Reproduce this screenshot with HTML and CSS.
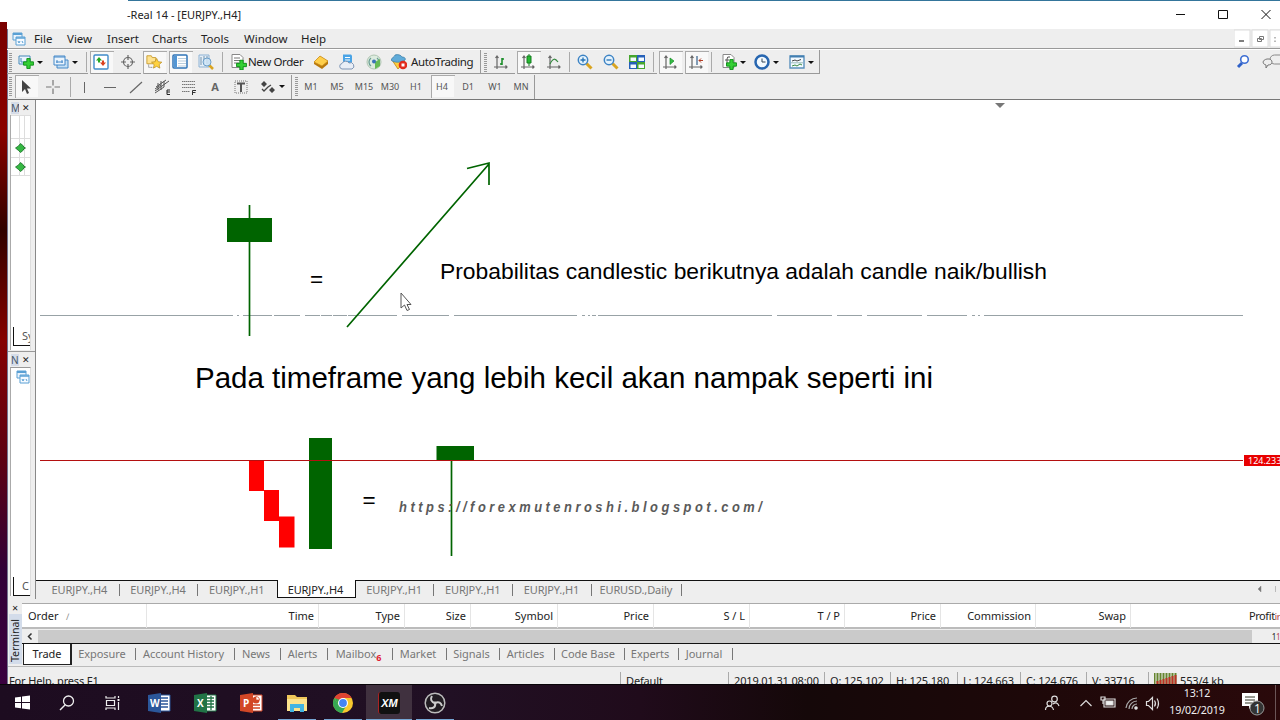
FILE: index.html
```html
<!DOCTYPE html>
<html lang="en">
<head>
<meta charset="UTF-8">
<title>Real 14 - [EURJPY.,H4]</title>
<link rel="stylesheet" href="styles.css">
</head>
<body>
<svg width="0" height="0" class="defs">
    <defs>
        <symbol id="windows" viewBox="0 0 16 14"><path d="M1 2l6-.8v5.300H1zM8 1l8-1v6.500H8zM1 7.500h6v5.300L1 12zM8 7.500h8V14l-8-1z"/></symbol>
        <symbol id="plus" viewBox="0 0 10 10"><path d="M3.500.5h3v3h3v3h-3v3h-3v-3h-3v-3h3z" fill="#35cf35" stroke="#078a12" stroke-width=".8"/></symbol>
        <symbol id="minichart" viewBox="0 0 14 14"><path d="M1 1h9v7H1z" fill="#eaf4fd" stroke="#5aa0d4"/><path d="M1 2h9" stroke="#5aa0d4" stroke-width="2"/><path d="M4 5h9v8H4z" fill="#f5faff" stroke="#5aa0d4"/><path d="M4 6h9" stroke="#5aa0d4" stroke-width="1.500"/><path d="M6 9l1 2 1-2m2 0l1 2" fill="none" stroke="#5aa0d4"/></symbol>
        <symbol id="axes" viewBox="0 0 16 16"><path d="M4 2v13M1 13h13M2.500 4L4 2l1.500 2M12.500 11.500l1.500 1.500-1.500 1.500" fill="none" stroke="#666" stroke-width="1.200"/></symbol>
        <symbol id="lens" viewBox="0 0 16 16"><path d="M9.500 9.500l5 5" stroke="#d9a420" stroke-width="3"/><circle cx="6" cy="6" r="4.700" fill="#e5f3fd" stroke="#3d83c4" stroke-width="1.500"/></symbol>
    </defs>
</svg>
<div class="desktop">
    <div class="window">
        <header class="title-bar">
            <span class="title">-Real 14 - [EURJPY.,H4]</span>
            <svg class="caption" width="110" height="28" viewBox="1170 0 110 28"><path d="M1176 14.500h9M1218.500 10.500h9v8h-9zM1261.500 10l9 9m0-9l-9 9" fill="none" stroke="#111"/></svg>
        </header>
        <nav class="menu-bar">
            <svg width="14" height="14"><use href="#minichart"/></svg>
            <span class="m-file">File</span><span class="m-view">View</span><span class="m-insert">Insert</span><span class="m-charts">Charts</span><span class="m-tools">Tools</span><span class="m-window">Window</span><span class="m-help">Help</span>
            <svg class="mdi" width="46" height="19" viewBox="1234 29 46 19"><path d="M1234 30h16v17h-16zM1252 30h16v17h-16zM1270 30h16v17h-16z" fill="#fff" stroke="#ddd"/><path d="M1239 41h5" stroke="#555" stroke-width="1.500"/><path d="M1259.500 36.500h4v3h-4zM1257.500 38.500h4v3h-4z" fill="#fff" stroke="#777"/><path d="M1275 37v1.500m0 2v1.500" stroke="#777"/></svg>
        </nav>

        <!-- standard toolbar -->
        <div class="toolbar standard">
            <i class="grip"></i>
            <span class="btn drop"><svg viewBox="0 0 16 16"><path d="M1 2h11v8H1z" fill="#eaf4fd" stroke="#4488b8"/><path d="M3 4v4h7" fill="none" stroke="#4488b8"/><use href="#plus" x="5" y="4" width="11" height="11"/></svg></span>
            <span class="btn drop"><svg viewBox="0 0 16 16"><path d="M4 6h11v8H4z" fill="#c4dff4" stroke="#4488c8"/><path d="M1 2h11v9H1z" fill="#eaf4fd" stroke="#4488c8"/><path d="M1 3h11M3 8h7M4 6v3m5-3v3" stroke="#4488c8"/></svg></span>
            <i class="sep narrow"></i>
            <span class="btn on"><svg viewBox="0 0 16 16"><rect x="1" y="1" width="14" height="14" rx="1" fill="#fff" stroke="#3f8bc9" stroke-width="1.400"/><path d="M6 3l3 3.500H7v2H5v-2H3z" fill="#22a822"/><path d="M9 6.500h2v2h2L10 12 7 8.500h2z" fill="#d9401c"/></svg></span>
            <span class="btn gap1"><svg viewBox="0 0 16 16"><circle cx="8" cy="8" r="4.500" fill="none" stroke="#666" stroke-width="1.200"/><path d="M8 1v5M8 10v5M1 8h5M10 8h5" stroke="#666" stroke-width="1.200"/></svg></span>
            <span class="btn on"><svg viewBox="0 0 18 16"><path d="M1 1h5l1 2h4v7H1z" fill="#ffe390" stroke="#c79a2b"/><path d="M3 11v3h5" fill="none" stroke="#555" stroke-dasharray="1 1"/><path d="M12 4l1.800 3.700 4 .5-3 2.700.8 4-3.600-2-3.600 2 .8-4-3-2.700 4-.5z" fill="#ffd23f" stroke="#b78a1f" stroke-width=".8"/></svg></span>
            <span class="btn on"><svg viewBox="0 0 16 16"><rect x="1" y="1" width="14" height="13" rx="1" fill="#fff" stroke="#2f74b8" stroke-width="1.500"/><path d="M2 2h3v11H2z" fill="#5296d5"/><path d="M6 4.500h8M6 7h8M6 9.500h8M6 12h8" stroke="#b8cddd"/></svg></span>
            <span class="btn"><svg viewBox="0 0 16 16"><path d="M1 1h10v12H1z" fill="#e5eff8" stroke="#8db2d4"/><path d="M3 3v8m3-9v8m3-8v8" stroke="#7694ac"/><path d="M11 11l4 4" stroke="#d9a420" stroke-width="2.500"/><circle cx="9" cy="8" r="4" fill="#cfe6f8" fill-opacity=".8" stroke="#6c9fc9"/></svg></span>
            <i class="sep"></i>
            <span class="btn order"><svg viewBox="0 0 16 16"><path d="M1 .5h8l3 3v10H1z" fill="#fff" stroke="#888"/><path d="M3 4h6M3 6.500h6M3 9h5" stroke="#777"/><use href="#plus" x="5" y="5.500" width="11" height="11"/></svg></span>
            <span class="label new-order">New Order</span>
            <span class="btn"><svg viewBox="0 0 16 16"><path d="M1 8l6-6 8 5v3l-6 5-8-5z" fill="#b9790c"/><path d="M1 8l6-6 8 5-6 5z" fill="#ffcf4a" stroke="#c98c1c" stroke-width=".7"/></svg></span>
            <span class="btn"><svg viewBox="0 0 16 16"><path d="M4 .5h8l1 1v8H4z" fill="#4aa4e6"/><path d="M6 3.500h5M6 6h5" stroke="#fff"/><path d="M3 15a2.800 2.800 0 0 1 0-5.500 4 4 0 0 1 7-.5 3 3 0 0 1 3 6z" fill="#e9eef6" stroke="#7e95b5"/></svg></span>
            <span class="btn gap1"><svg viewBox="0 0 16 16"><circle cx="8" cy="8" r="7" fill="#dcebdf" stroke="#b0c5b2"/><path d="M5 4a5 5 0 0 0 0 8M11 4a5 5 0 0 1 0 8" fill="none" stroke="#6b9f94" stroke-width="1.300"/><path d="M9 8v7l5-3V5z" fill="#65bb55"/><circle cx="8" cy="7.500" r="2" fill="#3973b8"/></svg></span>
            <span class="btn auto"><svg viewBox="0 0 16 16"><path d="M1 6l6 9 7-8z" fill="#ffce3d" stroke="#cc9527"/><path d="M0 6c1-3 3-2 4-5 3-1 6 0 7 2 3 0 4 2 3 3-4 3-11 3-14 0z" fill="#5fabd9" stroke="#397ba5" stroke-width=".7"/><circle cx="12" cy="11" r="4.300" fill="#e12b1c"/><path d="M10.500 9.500h3v3h-3z" fill="#fff"/></svg></span>
            <span class="label autotrading">AutoTrading</span>
            <i class="end"></i><i class="grip second"></i>
            <span class="btn"><svg viewBox="0 0 16 16"><use href="#axes"/><path d="M7 10h2m0-6v7m0-6h2" fill="none" stroke="#138a22" stroke-width="1.500"/></svg></span>
            <span class="btn on gap1"><svg viewBox="0 0 16 16"><use href="#axes"/><path d="M9 0v12" stroke="#157d20"/><path d="M7 2h4v7H7z" fill="#27ba33" stroke="#157d20"/></svg></span>
            <span class="btn"><svg viewBox="0 0 16 16"><use href="#axes"/><path d="M4 10c3-6 5-6 8-2" fill="none" stroke="#35883f" stroke-width="1.200"/></svg></span>
            <i class="sep narrow"></i>
            <span class="btn gap1"><svg viewBox="0 0 16 16"><use href="#lens"/><path d="M3.500 6h5M6 3.500v5" stroke="#2472b5" stroke-width="1.300"/></svg></span>
            <span class="btn"><svg viewBox="0 0 16 16"><use href="#lens"/><path d="M3.500 6h5" stroke="#2472b5" stroke-width="1.300"/></svg></span>
            <span class="btn"><svg viewBox="0 0 16 16"><path d="M0 1h8v7H0zM8 8h8v7H8z" fill="#46a62e"/><path d="M8 1h8v7H8zM0 8h8v7H0z" fill="#2560b9"/><path d="M1.500 3.500H7V7H1.500zM9.500 3.500H15V7H9.500zM1.500 10.500H7V14H1.500zM9.500 10.500H15V14H9.500z" fill="#f4faff"/></svg></span>
            <i class="sep wide"></i>
            <span class="btn on"><svg viewBox="0 0 16 16"><use href="#axes"/><path d="M8 4l4 3-4 3.500z" fill="#36bd45" stroke="#138a22" stroke-width=".7"/></svg></span>
            <span class="btn on"><svg viewBox="0 0 16 16"><use href="#axes"/><path d="M9 2v9" stroke="#426a91" stroke-width="1.300"/><path d="M15 6.500h-4m2-2l-2 2 2 2" fill="none" stroke="#b23c24"/></svg></span>
            <i class="sep tail"></i>
            <span class="btn drop"><svg viewBox="0 0 16 16"><path d="M2 .5h8l3 3v10H2z" fill="#fff" stroke="#888"/><path d="M9 3q-3-1-3 2v6M4 6h4" fill="none" stroke="#555"/><use href="#plus" x="5" y="5" width="11" height="11"/></svg></span>
            <span class="btn drop narrower"><svg viewBox="0 0 16 16"><circle cx="8" cy="8" r="6.500" fill="#f3faff" stroke="#2766b0" stroke-width="2.500"/><path d="M8 4.500V8h3.500" fill="none" stroke="#345"/></svg></span>
            <span class="btn drop"><svg viewBox="0 0 16 16"><path d="M1 2h14v12H1z" fill="#f3faff" stroke="#5b91bd" stroke-width="1.400"/><path d="M1 2.500h14" stroke="#427eb0" stroke-width="2"/><path d="M3 7l3-1 2 1 4-1.500" fill="none" stroke="#444"/><path d="M2 8.800h12" stroke="#9bb"/><path d="M3 12l3-1 2 1 3-2 2 1" fill="none" stroke="#388a42"/></svg></span>
            <svg class="search" viewBox="0 0 44 18"><path d="M6 10l-4 4" stroke="#2f61c8" stroke-width="3"/><circle cx="8.500" cy="6.500" r="3.800" fill="#fff" stroke="#3e6fd3" stroke-width="1.600"/><rect x="34" y="2" width="20" height="9" rx="4.500" fill="#eee" stroke="#888"/><path d="M31 6c6-1 7 6 1 6l-2 3v-3c-4-1-4-5 1-6z" fill="#eee" stroke="#777"/></svg>
        </div>

        <!-- line studies + periods -->
        <div class="toolbar studies">
            <i class="grip"></i>
            <span class="btn on cursor"><svg viewBox="0 0 16 16"><path d="M4 1v12l3-3 2 5 2-1-2-4.500h4z" fill="#444"/></svg></span>
            <span class="btn cross"><svg viewBox="0 0 16 16"><path d="M8 1v5.500M8 9.500V15M1 8h5.500M9.500 8H15" stroke="#777" stroke-width="1.200"/></svg></span>
            <i class="sep"></i>
            <span class="btn vline"><svg viewBox="0 0 16 16"><path d="M8.500 3v11" stroke="#666"/></svg></span>
            <span class="btn"><svg viewBox="0 0 16 16"><path d="M2 8.500h12" stroke="#666"/></svg></span>
            <span class="btn"><svg viewBox="0 0 16 16"><path d="M2 14L14 3" stroke="#666" stroke-width="1.200"/></svg></span>
            <span class="btn gap1"><svg viewBox="0 0 16 16"><path d="M0 12L14 2M1 8l10-7M3 4v7m3-9v9m3-9v6M0 14l9-6M0 10l6-4" stroke="#555"/><path d="M15 11h-3v4.500h3M12 13h3" fill="none" stroke="#222"/></svg></span>
            <span class="btn"><svg viewBox="0 0 16 16"><path d="M1 2.500h13M1 5.500h13M1 8.500h13M1 12.500h8" stroke="#777" stroke-dasharray="1.500 .5"/><path d="M11.500 16v-4.500H15M11.500 13.500h3" fill="none" stroke="#333"/></svg></span>
            <span class="btn letter">A</span>
            <span class="btn"><svg viewBox="0 0 16 16"><rect x="2" y="2" width="12" height="12" fill="none" stroke="#777" stroke-dasharray="1 1"/><path d="M4 4.500h8M8 4.500V13" stroke="#555" stroke-width="2"/></svg></span>
            <span class="btn drop arrows"><svg viewBox="0 0 16 16"><path d="M4 2l3 3-3 3-3-3zM12 8l3 3-3 3-3-3z" fill="#444"/><path d="M2 10l2 2 4-4 3-2" fill="none" stroke="#444" stroke-width="1.300"/></svg></span>
            <i class="end"></i><i class="grip third"></i>
            <span class="btn per">M1</span><span class="btn per">M5</span><span class="btn per gap1">M15</span><span class="btn per">M30</span><span class="btn per">H1</span><span class="btn per on">H4</span><span class="btn per">D1</span><span class="btn per gap1">W1</span><span class="btn per">MN</span>
            <i class="end"></i>
        </div>

        <div class="workspace">
            <aside class="side">
                <div class="side-title"><b>M</b><span>✕</span></div>
                <div class="side-body market">
                    <svg width="20" height="61" viewBox="0 0 20 61"><path d="M0 .5h20M0 23.500h20M0 42.500h20M0 60.500h20M8.500 0v60M13.500 0v60" stroke="#ddd"/><g fill="#35b843" stroke="#146c22" stroke-width=".8"><path d="M9.500 28.500l3 2.500v1l2 1-2 1v1l-3 2.500-2-2-3-2.500 3-2z"/><path d="M9.500 47.500l3 2.500v1l2 1-2 1v1l-3 2.500-2-2-3-2.500 3-2z"/></g></svg>
                    <span class="side-tab">Sy</span>
                </div>
                <div class="side-title nav-title"><b>N</b><span>✕</span></div>
                <div class="side-body navigator">
                    <svg width="14" height="14"><use href="#minichart"/></svg>
                    <span class="side-tab">C</span>
                </div>
            </aside>
            <main class="chart-area">
                <!-- chart drawing, one unit per pixel -->
                <svg class="chart" width="1244" height="480" viewBox="36 100 1244 480">
                    <path d="M995 103h10l-5 5z" fill="#777"/>
                    <path d="M40 315.500H1243" stroke="#98a2a6"/>
                    <path d="M233 315.500h4M239 315.500h4M272 315.500h2M300 315.500h5M320 315.500h1M332 315.500h1M347 315.500h1M397 315.500h5M449 315.500h5M577 315.500h5M585 315.500h3M590 315.500h2M596 315.500h2M772 315.500h5M832 315.500h5M862 315.500h5M922 315.500h5M967 315.500h5M975 315.500h3M980 315.500h4" stroke="#fff" stroke-width="2"/>
                    <g fill="none" stroke="#006400" stroke-width="1.700">
                        <path d="M249.500 205v131M451.500 461v95M347 327l142-163M467 168.500l22-5.500v22"/>
                    </g>
                    <path d="M227 218h45v24h-45zM309 438h23v111h-23zM436.500 446h37.500v15h-37.500z" fill="#006400"/>
                    <path d="M249 461h15v30h-15zM264 490h15v31h-15zM279 516.500h15.500v31H279z" fill="#f00"/>
                    <path d="M40 460.500H1243" stroke="#b41010"/>
                    <path d="M401 293v15l3.500-3 2.500 5.500 2.500-1-2.500-5h4z" fill="#fff" stroke="#555"/>
                    <text x="310" y="287" font-size="22.500">=</text>
                    <text x="362.500" y="508" font-size="22.500">=</text>
                    <text x="440" y="279" font-size="22.500" textLength="607" lengthAdjust="spacingAndGlyphs">Probabilitas candlestic berikutnya adalah candle naik/bullish</text>
                    <text x="195" y="388" font-size="29.500" textLength="738" lengthAdjust="spacingAndGlyphs">Pada timeframe yang lebih kecil akan nampak seperti ini</text>
                    <text class="watermark" transform="translate(399 512) scale(.86 1)" textLength="422">https://forexmutenroshi.blogspot.com/</text>
                    <path d="M1244 455h36v11h-36z" fill="#e80000"/>
                    <text class="price" x="1248" y="464">124.2333</text>
                </svg>
                <div class="chart-tabs">
                    <span>EURJPY.,H4</span><span>EURJPY.,H4</span><span class="before">EURJPY.,H1</span><span class="active">EURJPY.,H4</span><span>EURJPY.,H1</span><span>EURJPY.,H1</span><span>EURJPY.,H1</span><span class="daily">EURUSD.,Daily</span>
                    <svg class="tab-scroll" width="24" height="16"><path d="M5 5v6L2 8zM19.500 5v6" fill="#777" stroke="#888" stroke-width=".5"/></svg>
                </div>
            </main>
        </div>

        <section class="terminal">
            <div class="terminal-side"><span class="close">✕</span><span class="vertical">Terminal</span></div>
            <div class="terminal-body">
                <div class="columns">
                    <span class="first">Order <i>&nbsp; ∕</i></span><span>Time</span><span>Type</span><span>Size</span><span>Symbol</span><span>Price</span><span>S / L</span><span>T / P</span><span>Price</span><span>Commission</span><span>Swap</span><span class="last">Profit<i>ir</i></span>
                </div>
                <div class="scroll"><svg width="16" height="13"><path d="M9.500 3.500l-3 3 3 3" fill="none" stroke="#333" stroke-width="1.500"/></svg><i></i><b>1<u>1</u></b></div>
                <div class="terminal-tabs">
                    <span class="active">Trade</span><span>Exposure</span><span>Account History</span><span>News</span><span>Alerts</span><span>Mailbox<sub>6</sub></span><span>Market</span><span>Signals</span><span>Articles</span><span>Code Base</span><span>Experts</span><span>Journal</span>
                </div>
            </div>
        </section>
        <footer class="status">
            <span>For Help, press F1</span><span>Default</span><span>2019.01.31 08:00</span><span>O: 125.102</span><span>H: 125.180</span><span>L: 124.663</span><span>C: 124.676</span><span>V: 33716</span>
            <span><svg width="23" height="13" viewBox="0 0 23 13"><path d="M.5 1v12M3.500 1v12M6.500 1v12M9.500 1v12M12.500 1v12M15.500 1v12M18.500 1v12M21.500 1v12" stroke="#65852e" stroke-width="2"/><path d="M3.500 9v4M6.500 8v5M9.500 7v6M12.500 6v7M15.500 5v8M18.500 4v9M21.500 3v10" stroke="#bd3025" stroke-width="2"/></svg>553/4 kb</span>
        </footer>
    </div>

    <div class="taskbar">
        <span class="task start"><svg width="16" height="15"><use href="#windows" fill="#fff"/></svg></span>
        <span class="task"><svg width="16" height="16"><circle cx="9.500" cy="6" r="5" fill="none" stroke="#eee" stroke-width="1.300"/><path d="M6 10l-5 5" stroke="#eee" stroke-width="1.400"/></svg></span>
        <span class="task"><svg width="17" height="16"><path d="M1 1v2h9V1M1 15v-2h9v2M1.500 5.500h8v5h-8zM13.500 1v2m0 4v8" fill="none" stroke="#eee" stroke-width="1.200"/><path d="M12.500 4h2v2h-2z" fill="#eee"/></svg></span>
        <span class="task office"><svg width="24" height="22"><path d="M12 3h11v16H12z" fill="#fff" stroke="#2b579a"/><path d="M14 6h7M14 9h7M14 12h7M14 15h7" stroke="#2b579a" stroke-width="1.300"/><path d="M1 3l13-2v20L1 19z" fill="#2b579a"/><text x="3" y="15">W</text></svg></span>
        <span class="task office"><svg width="24" height="22"><path d="M12 3h11v16H12z" fill="#fff" stroke="#217346"/><path d="M14 6h7M14 9h7M14 12h7M14 15h7M18 4v14" stroke="#217346" stroke-width="1.300"/><path d="M1 3l13-2v20L1 19z" fill="#217346"/><text x="4" y="15">X</text></svg></span>
        <span class="task office"><svg width="24" height="22"><path d="M12 3h11v16H12z" fill="#fff" stroke="#d24726"/><circle cx="17" cy="8" r="3.500" fill="#d24726"/><path d="M17 8V4.500A3.500 3.500 0 0 1 20.500 8z" fill="#fff" stroke="#d24726" stroke-width=".7"/><path d="M14 13h7M14 16h7" stroke="#d24726" stroke-width="1.300"/><path d="M1 3l13-2v20L1 19z" fill="#d24726"/><text x="4" y="15">P</text></svg></span>
        <span class="task open"><svg width="22" height="20"><path d="M1 2h8l2 2h10v14H1z" fill="#efc75a"/><path d="M1 6h20v12H1z" fill="#fce38d"/><path d="M4 19v-8h14v8h-4v-4H8v4z" fill="#42b4e2"/></svg></span>
        <span class="task open"><svg width="22" height="22" viewBox="0 0 22 22"><circle cx="11" cy="11" r="10" fill="#f7c82e"/><path d="M11 11L2.300 6A10 10 0 0 1 19.700 6H11z" fill="#df4332"/><path d="M2.300 6A10 10 0 0 0 10 21l4.800-8.200L11 11 6.500 13z" fill="#35a853"/><path d="M2.300 6l4.300 7.500 3-5z" fill="#35a853"/><circle cx="11" cy="11" r="5" fill="#fff"/><circle cx="11" cy="11" r="3.900" fill="#4285f4"/></svg></span>
        <span class="task open current"><b>XM</b></span>
        <span class="task open"><svg width="22" height="22" viewBox="0 0 22 22"><circle cx="11" cy="11" r="9.800" fill="#211c22" stroke="#bbb" stroke-width="1.500"/><path d="M11 11c-4-1-5-4-3-7m3 7c4-2 6 0 7 3m-7-3c1 4-2 6-6 5" fill="none" stroke="#ccc" stroke-width="2"/><circle cx="11" cy="11" r="1.500" fill="#ccc"/></svg></span>
        <div class="tray">
            <svg width="118" height="24" viewBox="1044 690 118 24" fill="none" stroke="#ddd" stroke-width="1.200"><circle cx="1049.500" cy="702.500" r="2.500"/><circle cx="1054.500" cy="698" r="2.800"/><path d="M1045.500 709c0-5 7-5 8 0M1053 703c3-2 5-1 6 2M1080.500 705l5.500-5.500 5.500 5.500"/><path d="M1104 698h11v8h-11z"/><path d="M1106 700h7v4h-7z" fill="#eee"/><path d="M1101 696h4v3h-4zM1103 699v4"/><path d="M1126 707a11 11 0 0 1 11-10M1129 708a8 8 0 0 1 8-8M1132 708a5 5 0 0 1 5-5" stroke="#aaa"/><circle cx="1136" cy="707" r="1.200" fill="#eee"/><path d="M1146.500 700.500h2l4-4v12l-4-4h-2zM1154.500 699.500q2 3 0 6M1157 697.500q3 5 0 10"/></svg>
            <div class="clock">13:12<br>19/02/2019</div>
            <svg class="notice" width="26" height="26" viewBox="0 0 26 26"><path d="M2 3h16v13h-6l-3 3v-3H2z" fill="#fff"/><path d="M5 7h10M5 10h10M5 13h7" stroke="#332"/><circle cx="17" cy="18" r="7" fill="#333" stroke="#999"/><text x="14" y="22.500">1</text></svg>
            <i class="peek"></i>
        </div>
    </div>
</div>
</body>
</html>
```
FILE: styles.css
```css
* {
    box-sizing: border-box;
}
body {
    margin: 0;
    width: 1280px;
    height: 720px;
    overflow: hidden;
    font-family: "Noto Sans", "Open Sans", sans-serif;
    font-size: 11px;
    color: #222;
}
.defs {
    display: block;
}
.desktop {
    width: 1280px;
    height: 720px;
    display: flex;
    flex-direction: column;
    background: linear-gradient(#fff 22px, #790000 22px, #8b0000 130px, #310000 230px, #850000 340px, #5c0012 460px, #310038 570px, #3a003e 684px);
}
.window {
    height: 684px;
    margin-left: 7px;
    display: flex;
    flex-direction: column;
    background: linear-gradient(#73718e, #73718e) left / 1px 100% no-repeat #eee;
    padding-left: 1px;
    overflow: hidden;
}
.title-bar {
    height: 29px;
    flex: none;
    display: flex;
    justify-content: space-between;
    background: linear-gradient(90deg, transparent 121px, #34759b 121px) top / 100% 1px no-repeat #fff;
    margin-left: -1px;
}
.title {
    margin-left: 120px;
    line-height: 29px;
}
.menu-bar {
    height: 20px;
    flex: none;
    display: flex;
    align-items: center;
    padding-left: 4px;
    border-bottom: 1px solid #999;
    font-size: 11.5px;
}
.menu-bar span {
    line-height: 18px;
}
.m-file { width: 33px; margin-left: 8px; }
.m-view { width: 40px; }
.m-insert { width: 45px; }
.m-charts { width: 49px; }
.m-tools { width: 43px; }
.m-window { width: 57px; }
.mdi {
    margin-left: auto;
}

/* toolbars */
.toolbar {
    flex: none;
    display: flex;
    align-items: center;
    margin-left: -1px;
}
.standard {
    height: 25px;
    background: linear-gradient(90deg, #999 813px, transparent 813px) bottom / 100% 1px no-repeat, linear-gradient(#999, #999) 812px 0 / 1px 100% no-repeat;
    border-top: 1px solid #fff;
}
.studies {
    height: 26px;
    border-bottom: 1px solid #777;
}
.grip {
    width: 7px;
    height: 19px;
    flex: none;
    background: repeating-linear-gradient(#999 0 1px, transparent 1px 2px) 2px 0 / 3px 100% no-repeat;
}
.grip.second { margin-left: 1px; width: 6px; }
.btn {
    width: 26px;
    height: 23px;
    flex: none;
    display: flex;
    align-items: center;
    justify-content: center;
}
.btn svg {
    width: 16px;
    height: 16px;
}
.btn.on {
    background: linear-gradient(#f8f8f8, #f8f8f8) 2px 0 / 23px 22px no-repeat;
    box-shadow: inset 2px 0 #eee, inset 3px 1px #aaa;
}
.btn.drop {
    width: 35px;
    justify-content: flex-start;
    padding-left: 4px;
}
.btn.drop::after {
    content: "";
    margin-left: 3px;
    border: 3px solid transparent;
    border-top-color: #111;
    border-bottom: 0;
}
.btn.drop.narrower { margin-left: -2px; width: 35px; }
.gap1 { margin-left: 1px; }
.sep {
    width: 6px;
    height: 20px;
    flex: none;
    background: linear-gradient(#aaa, #aaa) 3px 0 / 1px 100% no-repeat;
}
.sep.narrow { width: 4px; background-position: 2px 0; }
.sep.wide { width: 7px; }
.sep.tail { width: 8px; background-position: 2px 0; }
.order { margin-left: 1px; }
.auto { margin-left: -1px; }
.label {
    font-size: 11.5px;
    line-height: 21px;
    white-space: nowrap;
    letter-spacing: -.4px;
    padding-bottom: 1px;
}
.new-order { width: 60px; margin-left: -4px; }
.autotrading { width: 69px; margin-left: -1px; }
.end {
    width: 1px;
    height: 24px;
    background: #999;
}
.search {
    width: 44px;
    height: 18px;
    margin-left: auto;
}
.cursor { margin-left: -1px; }
.cross { margin-left: 1px; }
.studies .sep { margin-left: 1px; }
.studies .vline { margin-left: -2px; }
.studies .arrows { margin-left: 2px; }
.letter {
    color: #666;
    font-weight: bold;
}
.third { margin-left: 1px; margin-right: -2px; }
.per {
    color: #555;
    font-size: 9px;
}

/* left docked panels and chart */
.workspace {
    height: 499px;
    flex: none;
    display: flex;
}
.side {
    width: 28px;
    flex: none;
    display: flex;
    flex-direction: column;
    border-right: 1px solid #888;
}
.side-title {
    height: 15px;
    flex: none;
    display: flex;
    align-items: center;
    padding-left: 3px;
    gap: 1px;
    font-size: 10px;
}
.side-title b {
    width: 8px;
    overflow: hidden;
    font-weight: normal;
    color: #456;
    background: #d5dce8;
    line-height: 12px;
}
.side-title span {
    font: bold 9px "DejaVu Sans", sans-serif;
    margin-left: 2px;
}
.side-body {
    width: 21px;
    margin-left: 2px;
    background: #fff;
    border-left: 1px solid #aaa;
    border-right: 1px solid #ddd;
    display: flex;
    flex-direction: column;
    justify-content: space-between;
    overflow: hidden;
}
.market { height: 235px; padding-bottom: 4px; }
.nav-title { border-top: 1px solid #999; margin-top: 1px; height: 16px; }
.navigator { height: 229px; border-top: 1px solid #999; }
.navigator svg { margin: 2px 0 0 5px; }
.side-tab {
    height: 19px;
    margin-left: 2px;
    padding-left: 8px;
    border-left: 1px solid #111;
    border-bottom: 1px solid #111;
    line-height: 17px;
    color: #555;
}
.chart-area {
    flex: 1;
    min-width: 0;
    background: #fff;
}
.chart {
    display: block;
    font-family: "Liberation Sans", Arial, sans-serif;
}
.watermark {
    font-size: 15px;
    font-weight: bold;
    font-style: italic;
    fill: #5a5a5a;
}
.price {
    font: 9px "Noto Sans", sans-serif;
    fill: #fff;
}
.chart-tabs {
    height: 19px;
    display: flex;
    padding-left: 5px;
    background: #eee;
    border-top: 1px solid #111;
    color: #777;
}
.chart-tabs span {
    width: 78.7px;
    height: 17px;
    line-height: 17px;
    text-align: center;
    padding-right: 2px;
    background: linear-gradient(#777, #777) right 3px / 1px 12px no-repeat;
    letter-spacing: -.1px;
}
.chart-tabs .before { background: none; }
.chart-tabs .active {
    background: #fff;
    color: #222;
    border: 1px solid #111;
    border-top: 0;
    margin-top: -1px;
    height: 18px;
    line-height: 19px;
}
.chart-tabs .daily { width: 90px; }
.tab-scroll {
    margin-left: auto;
}

/* terminal */
.terminal {
    height: 68px;
    flex: none;
    display: flex;
    padding-top: 4px;
    border-bottom: 1px solid #bbb;
}
.terminal-side {
    width: 14px;
    flex: none;
    display: flex;
    flex-direction: column;
    align-items: center;
}
.close {
    font: bold 8px/11px "DejaVu Sans", sans-serif;
}
.vertical {
    width: 13px;
    height: 50px;
    writing-mode: vertical-rl;
    transform: rotate(180deg);
    background: #d3dcea;
    font-size: 10.500px;
    line-height: 12px;
    text-align: left;
    padding-top: 2px;
}
.terminal-body {
    flex: 1;
    min-width: 0;
}
.columns {
    height: 26px;
    display: grid;
    grid-template-columns: 125px 172px 86px 66px 87px 96px 96px 95px 96px 95px 95px 1fr;
    background: #fff;
    border-top: 1px solid #aaa;
    border-bottom: 2px solid #bbb;
    line-height: 23px;
}
.columns span {
    border-right: 1px solid #e5e5e5;
    text-align: right;
    padding-right: 4px;
    white-space: nowrap;
}
.columns .first {
    text-align: left;
    padding-left: 6px;
}
.columns i { font-style: normal; font-size: 9px; color: #888; }
.columns .last { border: 0; padding-right: 0; letter-spacing: -.4px; }
.columns .last i { font-size: 9px; color: #a33; }
.scroll {
    height: 15px;
    display: flex;
    align-items: center;
    border-bottom: 1px solid #111;
}
.scroll i {
    width: 1214px;
    height: 13px;
    background: #cacaca;
}
.scroll b { margin-left: auto; font-size: 8px; font-weight: normal; letter-spacing: -.5px; }
.scroll u { color: #b45; text-decoration: none; }
.terminal-tabs {
    height: 19px;
    display: grid;
    grid-template-columns: 49px 64px 99px 46px 47px 65px 54px 53px 55px 70px 54px 54px;
    padding-left: 1px;
    color: #777;
    text-align: center;
    line-height: 20px;
}
.terminal-tabs span {
    background: linear-gradient(#777, #777) right 4px / 1px 12px no-repeat;
    white-space: nowrap;
    padding-right: 4px;
    letter-spacing: -.05px;
}
.terminal-tabs .active {
    background: #fff;
    color: #222;
    border: 1px solid #222;
    border-right-width: 2px;
    border-top: 0;
    padding: 0;
}
.terminal-tabs sub {
    color: #e02030;
    font-size: 9px;
    font-weight: bold;
    line-height: 0;
}
.status {
    height: 17px;
    flex: none;
    display: grid;
    grid-template-columns: 612px 108px 96px 66px 67px 63px 66px 62px 1fr;
    line-height: 17px;
    padding-top: 5px;
    overflow: hidden;
}
.status span {
    height: 16px;
    padding-left: 5px;
    border-left: 1px solid #aaa;
    white-space: nowrap;
    letter-spacing: -.15px;
}
.status span:first-child { border: 0; padding-left: 1px; }
.status svg { vertical-align: top; margin-right: 3px; }

/* windows taskbar */
.taskbar {
    height: 36px;
    flex: none;
    display: flex;
    background: linear-gradient(90deg, #1d0c20, #211024 35%, #200b1b 50%, #150809 63%, #1d0809 80%, #2a090b);
    border-top: 1px solid #080408;
}
.task {
    width: 46px;
    height: 35px;
    display: flex;
    align-items: center;
    justify-content: center;
}
.start { width: 44px; }
.task.open {
    background: linear-gradient(#76a6d4, #76a6d4) center bottom / 38px 1px no-repeat;
}
.task.current {
    background: linear-gradient(#76a6d4, #76a6d4) center bottom / 100% 1px no-repeat #40313f;
}
.task b {
    width: 22px;
    height: 22px;
    border-radius: 3px;
    background: #111;
    color: #fff;
    font: italic bold 11px/22px "Liberation Sans", Arial, sans-serif;
    text-align: center;
    border-left: 1px solid #a22;
}
.office text {
    font: bold 10px "Open Sans", sans-serif;
    fill: #fff;
}
.tray {
    margin-left: auto;
    display: flex;
    align-items: center;
    color: #eee;
}
.clock {
    width: 72px;
    margin-left: -1px;
    padding-bottom: 2px;
    text-align: center;
    font-size: 10.700px;
    line-height: 17px;
    letter-spacing: -.15px;
}
.notice { margin-left: 7px; }
.notice text { font: 12px "Open Sans", sans-serif; fill: #fff; }
.peek {
    width: 1px;
    height: 35px;
    margin: 0 4px 0 9px;
    background: #6b5557;
}
```
